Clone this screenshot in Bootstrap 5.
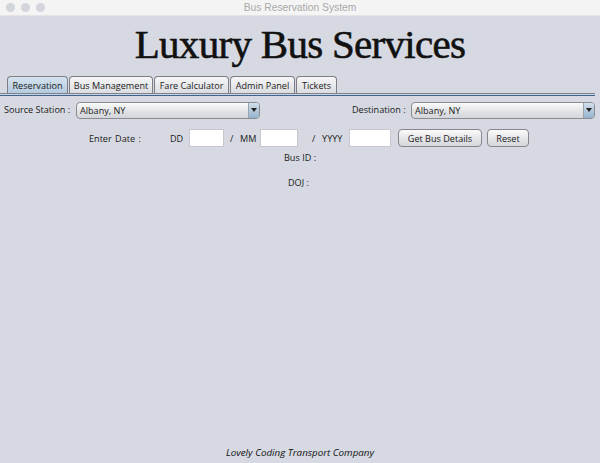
<!DOCTYPE html>
<html lang="en">
<head>
<meta charset="utf-8">
<title>Bus Reservation System</title>
<link href="https://cdn.jsdelivr.net/npm/bootstrap@5.3.0/dist/css/bootstrap.min.css" rel="stylesheet">
<style>
html,body{height:100%;margin:0;overflow:hidden}
body{background:#d6d9e1;font-family:"Open Sans","DejaVu Sans",sans-serif;font-size:9.1px;color:#1a1a1a}
.app-frame{height:463px}
.title-strip{height:16px;background:#f4f4f4;padding-left:6px;gap:6px;position:relative;flex:none;border-bottom:1px solid #e4e4e6}
.light{width:9px;height:9px;border-radius:50%;background:#d3d5dc}
.win-title{position:absolute;inset:0;text-align:center;line-height:15px;font-family:"Liberation Sans",sans-serif;font-size:10.3px;color:#a9a9a9}
.brand-title{font-family:"Liberation Serif",serif;font-size:41px;line-height:50px;height:50px;color:#111;text-align:center;margin:3px 0 7px;letter-spacing:-.7px;-webkit-text-stroke:.6px #111}
.tab-strip{padding-left:7px;height:17px;flex:none}
.tab-item{height:17px;border:1px solid #7d7f85;border-bottom:0;border-radius:4px 4px 0 0;background:linear-gradient(#f6f6f7,#dcdde1);line-height:17px;text-align:center;margin-right:1px}
.tab-on{background:linear-gradient(#d5e3ef,#b4cbdf)}
.tab-rule{height:3px;margin:0 5px 0 0;border-top:1px solid #7e828a;border-bottom:1px solid #3f6491;background:#c9d2dd;flex:none}
.route-row{height:17px;margin-top:6px;flex:none}
.route-lab{line-height:16px;white-space:nowrap}
.lab-source{width:76px;padding-left:4px}
.lab-dest{width:59px}
.combo{width:184px;height:17px;border:1px solid #8a8c92;border-radius:4px;background:linear-gradient(#fafafa,#e2e3e6 55%,#d5d6da);padding-left:3px;line-height:15px;position:relative;overflow:hidden}
.combo-arrow{position:absolute;right:0;top:0;bottom:0;width:11px;background:linear-gradient(#d2dfeb,#95b3cd);border-left:1px solid #9aa2ac}
.combo-arrow::after{content:"";position:absolute;left:2px;top:5px;border:3px solid transparent;border-top:4px solid #222;border-bottom:0}
.spacer-route{width:92px}
.date-row{height:18px;margin-top:10px;flex:none}
.date-lab{line-height:19px;white-space:nowrap;word-spacing:1px}
.date-box{height:18px;background:#fff;border:1px solid #c6c8cd;border-radius:0;padding:0}
.push{height:18px;border:1px solid #84868c;border-radius:4px;background:linear-gradient(#fbfbfb,#e4e5e8 55%,#d6d7db);font-size:9.1px;line-height:15px;padding:0;text-align:center;color:#1a1a1a}
.info-lab{line-height:14px;white-space:nowrap;flex:none}
.foot-line{font-style:italic;text-align:center;font-size:9.8px;line-height:14px;margin-bottom:3px;color:#111}
.w-tab1{width:61px}.w-tab2{width:84px}.w-tab3{width:75px}.w-tab4{width:65px}.w-tab5{width:41px}
.dl-1{margin-left:89px;width:81px}.dl-2{width:19px}.box-a{width:35px}
.dl-3{width:36px;padding-left:6px}.box-b{width:38px}
.dl-4{width:51px;padding-left:14px}.box-c{width:42px}
.btn-get{width:84px;margin-left:7px}.btn-reset{width:42px;margin-left:5px}
.info-bus{margin-top:4px;padding-left:284px}
.info-doj{margin-top:11px;padding-left:288px}
</style>
</head>
<body>
<div class="app-frame d-flex flex-column">
  <div class="title-strip d-flex align-items-center">
    <span class="light"></span><span class="light"></span><span class="light"></span>
    <div class="win-title">Bus Reservation System</div>
  </div>
  <h1 class="brand-title fw-normal">Luxury Bus Services</h1>
  <div class="tab-strip d-flex">
    <div class="tab-item tab-on w-tab1">Reservation</div>
    <div class="tab-item w-tab2">Bus Management</div>
    <div class="tab-item w-tab3">Fare Calculator</div>
    <div class="tab-item w-tab4">Admin Panel</div>
    <div class="tab-item w-tab5">Tickets</div>
  </div>
  <div class="tab-rule"></div>
  <div class="route-row d-flex">
    <div class="route-lab lab-source">Source Station :</div>
    <div class="combo">Albany, NY<span class="combo-arrow"></span></div>
    <div class="spacer-route"></div>
    <div class="route-lab lab-dest">Destination :</div>
    <div class="combo">Albany, NY<span class="combo-arrow"></span></div>
  </div>
  <div class="date-row d-flex">
    <div class="date-lab dl-1">Enter Date :</div>
    <div class="date-lab dl-2">DD</div>
    <input class="date-box box-a" type="text" aria-label="DD">
    <div class="date-lab dl-3">/ &nbsp;MM</div>
    <input class="date-box box-b" type="text" aria-label="MM">
    <div class="date-lab dl-4">/ &nbsp;YYYY</div>
    <input class="date-box box-c" type="text" aria-label="YYYY">
    <button class="push btn-get" type="button">Get Bus Details</button>
    <button class="push btn-reset" type="button">Reset</button>
  </div>
  <div class="info-lab info-bus">Bus ID :</div>
  <div class="info-lab info-doj">DOJ :</div>
  <div class="foot-line mt-auto">Lovely Coding Transport Company</div>
</div>
</body>
</html>
